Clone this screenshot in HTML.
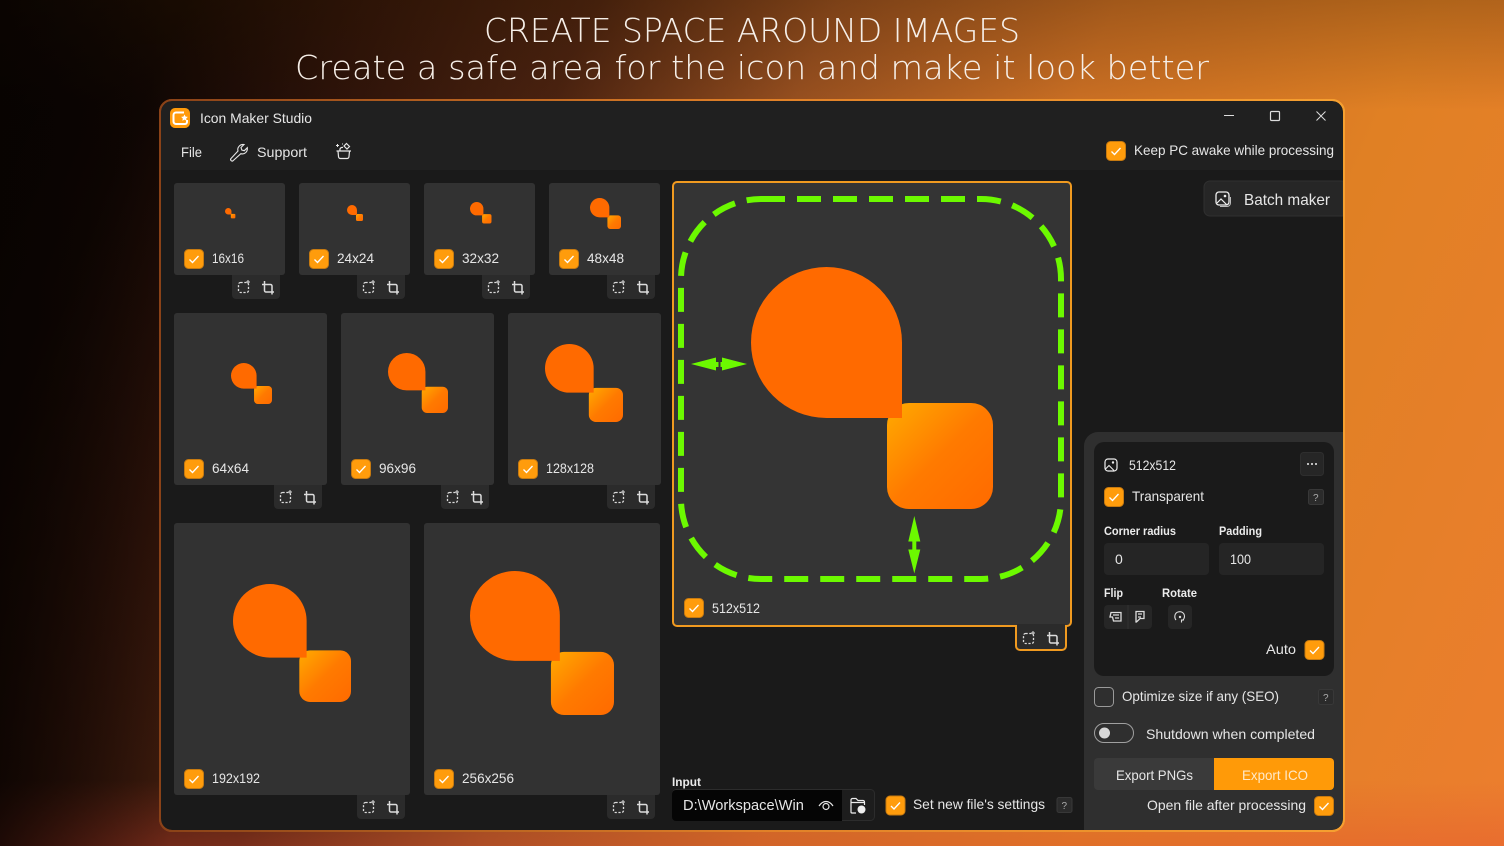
<!DOCTYPE html>
<html><head><meta charset="utf-8"><title>Icon Maker Studio</title>
<style>
html,body{margin:0;padding:0;width:1504px;height:846px;overflow:hidden;background:#000}
svg{display:block;position:absolute;left:0;top:0}
text{font-family:"Liberation Sans",sans-serif;font-size:14px;fill:#e6e6e6}
.b{font-weight:700;font-size:12px;fill:#ececec}
.t{font-family:"DejaVu Sans","Liberation Sans",sans-serif;font-weight:200;font-size:33px;fill:#f6efe8}
</style></head><body>
<div style="position:absolute;left:0;top:0;width:1504px;height:846px;background:linear-gradient(113deg,#050201 0%,#0f0603 10%,#2c1209 20%,#4a2210 32%,#985020 45%,#cc7024 60%,#e08024 77%,#ec7e2e 100%)"></div>
<div style="position:absolute;left:0;top:0;width:1504px;height:846px;background:linear-gradient(to bottom,rgba(50,25,0,.28) 0,rgba(50,25,0,0) 110px,rgba(225,70,50,0) 780px,rgba(225,70,50,.3) 846px)"></div>
<div style="position:absolute;left:0;top:0;width:1504px;height:846px;background:linear-gradient(to right,rgba(8,3,1,.75) 0,rgba(8,3,1,0) 170px)"></div>
<svg width="1504" height="846" viewBox="0 0 1504 846" xmlns="http://www.w3.org/2000/svg">
<defs>
<linearGradient id="sq" x1="0" y1="0" x2="1" y2="1"><stop offset="0" stop-color="#ffab00"/><stop offset=".5" stop-color="#ff7a00"/><stop offset="1" stop-color="#ff6a00"/></linearGradient>
<linearGradient id="wb" x1="0" y1="0" x2="1" y2="0"><stop offset="0" stop-color="#8a4218"/><stop offset=".5" stop-color="#e08028"/><stop offset="1" stop-color="#f6a030"/></linearGradient>
<g id="ic">
<rect x="136" y="136" width="106" height="106" rx="22" fill="url(#sq)"/>
<path d="M75.5 0A75.5 75.5 0 0 1 151 75.5V151H75.5A75.5 75.5 0 0 1 75.5 0Z" fill="#ff6a00"/>
</g>
<g id="ck"><rect x=".5" y=".5" width="19" height="19" rx="4" fill="#ff9c0c" stroke="#c77a10"/><path d="M5.500 10.500l3 3 6-6.500" fill="none" stroke="#fff" stroke-width="1.300"/></g>
<g id="tb"><path d="M0 0H48V20a4 4 0 0 1-4 4H4a4 4 0 0 1-4-4Z" fill="#2b2b2b"/><use href="#tbi"/></g>
<g id="tbi" fill="none" stroke="#dcdcdc" stroke-width="1.300">
<rect x="6.500" y="7.500" width="10" height="10" rx="2" stroke-dasharray="2.200 1.600"/>
<path d="M16 5v4M14 7h4" stroke-width="1"/>
<path d="M32.500 6v9.500a1.500 1.500 0 0 0 1.500 1.500H42" stroke-width="1.500"/><path d="M30 9.500h8.500a1.500 1.500 0 0 1 1.500 1.500V19.500" stroke-width="1.500"/>
</g>
<g id="q"><rect x=".5" y=".5" width="15" height="15" rx="2" fill="#2b2b2b" stroke="#383838"/><text x="5" y="12" style="font-size:10px;fill:#aaa">?</text></g>
<clipPath id="pc"><rect x="683" y="795" width="121" height="22"/></clipPath>
</defs>

<text class="t" x="484" y="42" textLength="536" lengthAdjust="spacingAndGlyphs">CREATE SPACE AROUND IMAGES</text>
<text class="t" x="295" y="79" textLength="914" lengthAdjust="spacingAndGlyphs">Create a safe area for the icon and make it look better</text>

<!-- window -->
<rect x="160" y="100" width="1184" height="731" rx="12" fill="#1a1a1a" stroke="url(#wb)" stroke-width="2"/>
<path d="M161 170V113A12 12 0 0 1 173 101H1331A12 12 0 0 1 1343 113V170Z" fill="#202020"/>

<rect x="170" y="108" width="20" height="20" rx="5" fill="#ff9a0a"/>
<path d="M184 112.500H176a2.500 2.500 0 0 0-2.500 2.500v6.500a2.500 2.500 0 0 0 2.500 2.500h9a2 2 0 0 0 2-2V120" fill="none" stroke="#fff" stroke-width="2"/>
<path d="M184.500 114.500l1.100 2.100 2.300.3-1.700 1.600.4 2.200-2.100-1.100-2.100 1.100.4-2.200-1.700-1.600 2.300-.3Z" fill="#fff"/>
<text x="200" y="123" textLength="112" lengthAdjust="spacingAndGlyphs">Icon Maker Studio</text>
<path d="M1224 115.500h10" stroke="#ddd" stroke-width="1"/>
<rect x="1270.500" y="111.500" width="9" height="9" rx="1" fill="none" stroke="#ddd" stroke-width="1.200"/>
<path d="M1316.500 111.500l9 9M1325.500 111.500l-9 9" stroke="#ddd" stroke-width="1"/>

<text x="181" y="157" textLength="21" lengthAdjust="spacingAndGlyphs">File</text>
<path d="M231 158.500l7-7.500c-1-3 1.500-7 6-6.500l-3 3 .8 2.500 2.500.7 3-3c.5 4.500-3 7-6.500 6l-7.500 6.800a1.500 1.500 0 0 1-2.300-2Z" fill="none" stroke="#e6e6e6" stroke-width="1.100"/>
<text x="257" y="157" textLength="50" lengthAdjust="spacingAndGlyphs">Support</text>
<g fill="none" stroke="#e6e6e6" stroke-width="1.200"><path d="M338 151h11.500l-.5 5.500a2 2 0 0 1-2 2h-6.500a2 2 0 0 1-2-2ZM336.500 151h14.500M340 150.500c-.5-2 1-3.500 3-3"/><path d="M346.500 143.500l3 3-2.500 2.500-3-3Z"/><path d="M336 145.500h3M337.500 144v3M342 144h1" stroke-width="1"/></g>

<use href="#ck" x="1106" y="141"/>
<text x="1134" y="155" textLength="200" lengthAdjust="spacingAndGlyphs">Keep PC awake while processing</text>

<!-- row cards -->
<g fill="#323232">
<rect x="174" y="183" width="111" height="92" rx="3"/><rect x="299" y="183" width="111" height="92" rx="3"/><rect x="424" y="183" width="111" height="92" rx="3"/><rect x="549" y="183" width="111" height="92" rx="3"/>
<rect x="174" y="313" width="153" height="172" rx="3"/><rect x="341" y="313" width="153" height="172" rx="3"/><rect x="508" y="313" width="153" height="172" rx="3"/>
<rect x="174" y="523" width="236" height="272" rx="3"/><rect x="424" y="523" width="236" height="272" rx="3"/>
</g>
<use href="#tb" x="232" y="275"/><use href="#tb" x="357" y="275"/><use href="#tb" x="482" y="275"/><use href="#tb" x="607" y="275"/>
<use href="#tb" x="274" y="485"/><use href="#tb" x="441" y="485"/><use href="#tb" x="607" y="485"/>
<use href="#tb" x="357" y="795"/><use href="#tb" x="607" y="795"/>

<use href="#ic" transform="translate(225 208) scale(.0428)"/>
<use href="#ic" transform="translate(347 205) scale(.0661)"/>
<use href="#ic" transform="translate(470 202) scale(.0888)"/>
<use href="#ic" transform="translate(590 198) scale(.1281)"/>
<use href="#ic" transform="translate(231 363) scale(.1694)"/>
<use href="#ic" transform="translate(388 353) scale(.2479)"/>
<use href="#ic" transform="translate(545 344) scale(.3223)"/>
<use href="#ic" transform="translate(233 584) scale(.4876)"/>
<use href="#ic" transform="translate(470 571) scale(.5950)"/>

<use href="#ck" x="184" y="249"/><text x="212" y="263" textLength="32" lengthAdjust="spacingAndGlyphs">16x16</text>
<use href="#ck" x="309" y="249"/><text x="337" y="263" textLength="37" lengthAdjust="spacingAndGlyphs">24x24</text>
<use href="#ck" x="434" y="249"/><text x="462" y="263" textLength="37" lengthAdjust="spacingAndGlyphs">32x32</text>
<use href="#ck" x="559" y="249"/><text x="587" y="263" textLength="37" lengthAdjust="spacingAndGlyphs">48x48</text>
<use href="#ck" x="184" y="459"/><text x="212" y="473" textLength="37" lengthAdjust="spacingAndGlyphs">64x64</text>
<use href="#ck" x="351" y="459"/><text x="379" y="473" textLength="37" lengthAdjust="spacingAndGlyphs">96x96</text>
<use href="#ck" x="518" y="459"/><text x="546" y="473" textLength="48" lengthAdjust="spacingAndGlyphs">128x128</text>
<use href="#ck" x="184" y="769"/><text x="212" y="783" textLength="48" lengthAdjust="spacingAndGlyphs">192x192</text>
<use href="#ck" x="434" y="769"/><text x="462" y="783" textLength="52" lengthAdjust="spacingAndGlyphs">256x256</text>

<!-- large card -->
<rect x="673" y="182" width="398" height="444" rx="4" fill="#343434" stroke="#f09a20" stroke-width="2"/>
<path d="M1016 626V646a4 4 0 0 0 4 4H1062a4 4 0 0 0 4-4V626" fill="#2b2b2b" stroke="#f09a20" stroke-width="2"/>
<rect x="1017" y="624" width="48" height="3" fill="#2b2b2b"/>
<use href="#tbi" transform="translate(1017 626)"/>
<rect x="681" y="199" width="380" height="380" rx="80" fill="none" stroke="#6cf900" stroke-width="6" stroke-dasharray="24 12"/>
<use href="#ic" transform="translate(751 267)"/>
<path d="M691 364l25-6.500v4.500h2.500v5H716v3.500ZM747 364l-25-6.500v4.500h-1.500v5H722v3.500Z" fill="#6cf900"/>
<path d="M914.300 516l6 25.500h-4v8h4l-6 24-6-24h4v-8h-4Z" fill="#6cf900"/>
<use href="#ck" x="684" y="598"/><text x="712" y="613" textLength="48" lengthAdjust="spacingAndGlyphs">512x512</text>

<!-- input row -->
<text class="b" x="672" y="786" textLength="29" lengthAdjust="spacingAndGlyphs">Input</text>
<rect x="672.500" y="789.500" width="202" height="31" rx="4" fill="#1d1d1d" stroke="#2c2c2c"/>
<path d="M842 790H676a4 4 0 0 0-4 4v23a4 4 0 0 0 4 4H842Z" fill="#050505"/>
<text x="683" y="810" textLength="129" lengthAdjust="spacingAndGlyphs" clip-path="url(#pc)" style="font-size:15px">D:\Workspace\Wind</text>
<path d="M819 806c4-6 10-6 14 0" fill="none" stroke="#e6e6e6" stroke-width="1.200"/><circle cx="826" cy="806.500" r="3" fill="none" stroke="#e6e6e6" stroke-width="1.200"/>
<path d="M851 812v-12a1.500 1.500 0 0 1 1.500-1.500h3.500l2 2h5a1.500 1.500 0 0 1 1.500 1.500v3M851 802.500h14M851 812a1 1 0 0 0 1 1h4" fill="none" stroke="#eee" stroke-width="1.200"/><circle cx="861.500" cy="809.500" r="4" fill="#eee"/>
<use href="#ck" x="885.500" y="795.500"/>
<text x="913" y="809" textLength="132" lengthAdjust="spacingAndGlyphs">Set new file's settings</text>
<use href="#q" x="1056.500" y="797"/>

<!-- batch maker -->
<path d="M1343 181H1210a6 6 0 0 0-6 6v23a6 6 0 0 0 6 6H1343Z" fill="#262626" stroke="#303030"/>
<rect x="1216" y="192" width="13" height="13" rx="3" fill="none" stroke="#eee" stroke-width="1.300"/><circle cx="1225" cy="196" r="1.300" fill="#eee"/><path d="M1217 203l4-4 6 6" fill="none" stroke="#eee" stroke-width="1.200"/><path d="M1230.500 197v6a3.500 3.500 0 0 1-3.500 3.500h-7" fill="none" stroke="#bbb"/>
<text x="1244" y="205" textLength="86" lengthAdjust="spacingAndGlyphs" style="font-size:16px">Batch maker</text>

<!-- right panel -->
<path d="M1343 432H1098a14 14 0 0 0-14 14V830H1331a12 12 0 0 0 12-12Z" fill="#2f2f2f"/>
<rect x="1094" y="442" width="240" height="234" rx="10" fill="#1a1a1a"/>
<rect x="1105" y="459" width="12" height="12" rx="3" fill="none" stroke="#eee" stroke-width="1.200"/><circle cx="1113" cy="462.500" r="1.200" fill="#eee"/><path d="M1105.500 469l3.500-3.500 5 5" fill="none" stroke="#eee"/>
<text x="1129" y="470" textLength="47" lengthAdjust="spacingAndGlyphs">512x512</text>
<rect x="1300.500" y="452.500" width="23" height="23" rx="3" fill="#262626" stroke="#2e2e2e"/>
<g fill="#eee"><circle cx="1308" cy="464" r="1"/><circle cx="1312" cy="464" r="1"/><circle cx="1316" cy="464" r="1"/></g>
<use href="#ck" x="1104" y="487"/>
<text x="1132" y="501" textLength="72" lengthAdjust="spacingAndGlyphs">Transparent</text>
<use href="#q" x="1308" y="489"/>
<text class="b" x="1104" y="535" textLength="72" lengthAdjust="spacingAndGlyphs">Corner radius</text>
<text class="b" x="1219" y="535" textLength="43" lengthAdjust="spacingAndGlyphs">Padding</text>
<rect x="1104" y="543" width="105" height="32" rx="4" fill="#252525"/>
<rect x="1219" y="543" width="105" height="32" rx="4" fill="#252525"/>
<text x="1115" y="564">0</text><text x="1230" y="564" textLength="21" lengthAdjust="spacingAndGlyphs">100</text>
<text class="b" x="1104" y="597" textLength="19" lengthAdjust="spacingAndGlyphs">Flip</text>
<text class="b" x="1162" y="597" textLength="35" lengthAdjust="spacingAndGlyphs">Rotate</text>
<rect x="1104" y="605" width="48" height="24" rx="4" fill="#262626"/><path d="M1128 605v24" stroke="#333"/>
<rect x="1168" y="605" width="24" height="24" rx="4" fill="#262626"/>
<path d="M1111 612.500h10v8.500h-7.500l-1-4h-2.500ZM1113 615h6M1115 618h4" fill="none" stroke="#ddd" stroke-width="1.300"/>
<path d="M1136 611.500h8v7h-4l-3.500 3.500h-.5ZM1138 614h4M1138 617h3" fill="none" stroke="#ddd" stroke-width="1.300"/>
<path d="M1176 620c-2-2.500-1.500-7 2-8 3.500-1 6.500 1 6.500 4.500 0 2-1 3-2 4M1184 620h-2.500v2.500" fill="none" stroke="#ddd" stroke-width="1.100"/><circle cx="1180" cy="617" r="1.200" fill="#ddd"/>
<text x="1266" y="654" textLength="30" lengthAdjust="spacingAndGlyphs">Auto</text>
<use href="#ck" x="1304.500" y="640"/>

<rect x="1094.500" y="687.500" width="19" height="19" rx="4" fill="none" stroke="#9a9a9a"/>
<text x="1122" y="701" textLength="157" lengthAdjust="spacingAndGlyphs">Optimize size if any (SEO)</text>
<use href="#q" x="1318" y="689"/>
<rect x="1094.500" y="723.500" width="39" height="19" rx="9.500" fill="none" stroke="#a0a0a0"/><circle cx="1104.500" cy="733" r="5.500" fill="#d8d8d8"/>
<text x="1146" y="739" textLength="169" lengthAdjust="spacingAndGlyphs">Shutdown when completed</text>
<path d="M1214 758H1098a4 4 0 0 0-4 4v24a4 4 0 0 0 4 4H1214Z" fill="#3a3a3a"/>
<path d="M1214 758H1330a4 4 0 0 1 4 4v24a4 4 0 0 1-4 4H1214Z" fill="#ff9a08"/>
<text x="1116" y="780" textLength="77" lengthAdjust="spacingAndGlyphs">Export PNGs</text>
<text x="1242" y="780" textLength="66" lengthAdjust="spacingAndGlyphs" style="fill:#ffe9c8">Export ICO</text>
<text x="1147" y="810" textLength="159" lengthAdjust="spacingAndGlyphs">Open file after processing</text>
<use href="#ck" x="1314" y="796"/>
<rect x="160" y="100" width="1184" height="731" rx="12" fill="none" stroke="url(#wb)" stroke-width="2"/>
</svg>
</body></html>
